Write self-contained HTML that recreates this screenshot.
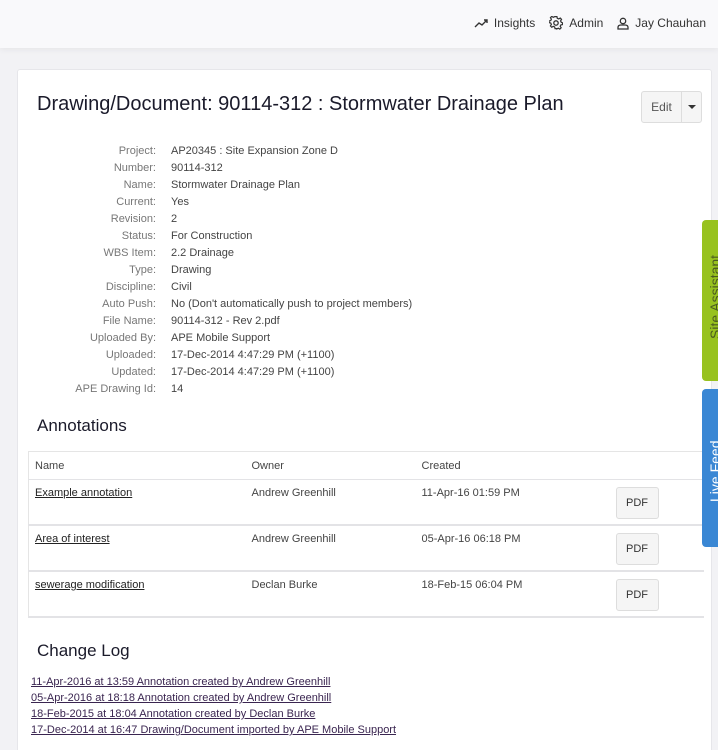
<!DOCTYPE html>
<html><head><meta charset="utf-8">
<style>
*{box-sizing:border-box}
html,body{margin:0;width:718px;height:750px;overflow:hidden}
body{background:#f2f2f5;font-family:"Liberation Sans",sans-serif;color:#333;position:relative}
.hdr{height:48px;background:#f9f9fb;box-shadow:0 2px 6px rgba(0,0,0,.05);position:relative}
.nav{position:absolute;right:12px;top:16px;font-size:12px;color:#333;display:flex;gap:14px;align-items:center}
.nav span{display:flex;align-items:center;gap:6px}
.card{position:absolute;left:17px;top:69px;width:695px;height:700px;background:#fff;border:1px solid #e6e6ea;border-radius:3px}
h1{position:absolute;left:19px;top:23px;margin:0;font-size:20px;font-weight:normal;color:#1a1a2a;white-space:nowrap}
.btn{position:absolute;left:623px;top:21px;width:61px;height:32px;border:1px solid #ddd;border-radius:3px;background:#f5f5f5;display:flex}
.btn div{height:100%;display:flex;align-items:center;justify-content:center}
.props{position:absolute;left:0;top:73px;font-size:11px;line-height:17px}
.props div{display:flex}
.props b{font-weight:normal;color:#777;width:153px;text-align:right;padding-right:15px}
.props i{font-style:normal;color:#444}
h2{position:absolute;margin:0;font-size:17px;font-weight:normal;color:#1a1a2a}
table{position:absolute;left:10px;top:381px;width:676px;border-collapse:collapse;font-size:11px;color:#444;border-left:1px solid #e5e5e5;border-top:1px solid #e5e5e5}
td{vertical-align:top;padding:7px 6px 5px;border-bottom:2px solid #e3e3e6;height:42px}
th{font-weight:normal;text-align:left;padding:7px 6px 6px;border-bottom:1px solid #e3e3e6;height:28px}
a{color:#222;text-decoration:underline}
.pdf{width:43px;height:32px;border:1px solid #ddd;border-radius:3px;background:#f5f5f5;display:flex;align-items:center;justify-content:center;font-size:11px;color:#333}
.log{position:absolute;left:13px;top:604px;font-size:11px;line-height:16px}
.log a{display:block;color:#3a2550}
.tab{position:absolute;left:702px;width:20px;border-radius:4px 0 0 4px;color:#fff;font-size:14px}
.tab span{position:absolute;left:3px;transform:translateY(-50%) rotate(-90deg);transform-origin:center;white-space:nowrap;width:20px;display:block;text-align:center}
</style></head><body>
<div class="hdr"><div class="nav">
<span><svg width="14" height="10" viewBox="0 0 14 10"><path d="M1 9 L5 5 L8 7 L13 2 M10 2 H13 V5" fill="none" stroke="#333" stroke-width="1.4"/></svg>Insights</span>
<span><svg width="14" height="14" viewBox="0 0 14 14"><path d="M6 1h2l.4 1.8 1.5.7 1.6-1 1.4 1.4-1 1.6.7 1.5L14 7.6v1.8l-1.8.4-.7 1.5 1 1.6-1.4 1.4-1.6-1-1.5.7L8 13.8H6l-.4-1.8-1.5-.7-1.6 1L1.1 10.9l1-1.6-.7-1.5L-.4 7.4V5.6l1.8-.4.7-1.5-1-1.6L2.5.7l1.6 1 1.5-.7Z" transform="translate(.4 -.3) scale(.94)" fill="none" stroke="#333" stroke-width="1.3"/><circle cx="7" cy="7" r="2.2" fill="none" stroke="#333" stroke-width="1.3"/></svg>Admin</span>
<span><svg width="12" height="13" viewBox="0 0 12 13"><circle cx="6" cy="4" r="2.7" fill="none" stroke="#333" stroke-width="1.3"/><path d="M1 12 V10.5 Q1 8 4 8 H8 Q11 8 11 10.5 V12 Z" fill="none" stroke="#333" stroke-width="1.3"/></svg>Jay Chauhan</span>
</div></div>
<div class="card">
<h1>Drawing/Document: 90114-312 : Stormwater Drainage Plan</h1>
<div class="btn"><div style="width:40px;border-right:1px solid #ddd;font-size:12px;color:#555">Edit</div><div style="flex:1"><svg width="8" height="5"><path d="M0 0H8L4 4Z" fill="#333"/></svg></div></div>
<div class="props">
<div><b>Project:</b><i>AP20345 : Site Expansion Zone D</i></div>
<div><b>Number:</b><i>90114-312</i></div>
<div><b>Name:</b><i>Stormwater Drainage Plan</i></div>
<div><b>Current:</b><i>Yes</i></div>
<div><b>Revision:</b><i>2</i></div>
<div><b>Status:</b><i>For Construction</i></div>
<div><b>WBS Item:</b><i>2.2 Drainage</i></div>
<div><b>Type:</b><i>Drawing</i></div>
<div><b>Discipline:</b><i>Civil</i></div>
<div><b>Auto Push:</b><i>No (Don't automatically push to project members)</i></div>
<div><b>File Name:</b><i>90114-312 - Rev 2.pdf</i></div>
<div><b>Uploaded By:</b><i>APE Mobile Support</i></div>
<div><b>Uploaded:</b><i>17-Dec-2014 4:47:29 PM (+1100)</i></div>
<div><b>Updated:</b><i>17-Dec-2014 4:47:29 PM (+1100)</i></div>
<div><b>APE Drawing Id:</b><i>14</i></div>
</div>
<h2 style="left:19px;top:346px">Annotations</h2>
<table>
<tr><th style="width:217px">Name</th><th style="width:170px">Owner</th><th style="width:194px">Created</th><th></th></tr>
<tr><td><a>Example annotation</a></td><td>Andrew Greenhill</td><td>11-Apr-16 01:59 PM</td><td><div class="pdf">PDF</div></td></tr>
<tr><td><a>Area of interest</a></td><td>Andrew Greenhill</td><td>05-Apr-16 06:18 PM</td><td><div class="pdf">PDF</div></td></tr>
<tr><td><a>sewerage modification</a></td><td>Declan Burke</td><td>18-Feb-15 06:04 PM</td><td><div class="pdf">PDF</div></td></tr>
</table>
<h2 style="left:19px;top:571px">Change Log</h2>
<div class="log">
<a>11-Apr-2016 at 13:59 Annotation created by Andrew Greenhill</a>
<a>05-Apr-2016 at 18:18 Annotation created by Andrew Greenhill</a>
<a>18-Feb-2015 at 18:04 Annotation created by Declan Burke</a>
<a>17-Dec-2014 at 16:47 Drawing/Document imported by APE Mobile Support</a>
</div>
</div>
<div class="tab" style="top:220px;height:161px;background:#98c21f;color:#4a5a20"><span style="top:68%">Site Assistant</span></div>
<div class="tab" style="top:389px;height:158px;background:#3a87d4"><span style="top:65%">Live Feed</span></div>
</body></html>
